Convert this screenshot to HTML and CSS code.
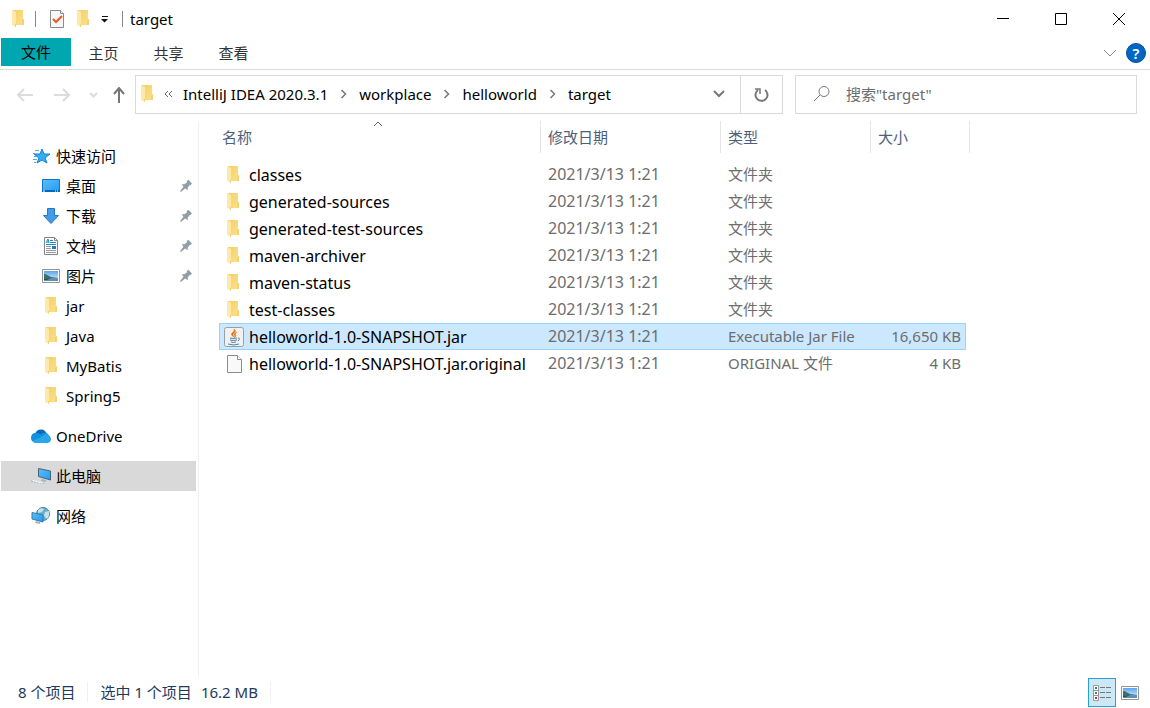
FILE: index.html
```html
<!DOCTYPE html>
<html lang="zh-CN">

<head>
    <meta charset="UTF-8">
    <meta name="viewport" content="width=device-width, initial-scale=1.0">
    <title>target</title>
    <link rel="stylesheet" href="styles.css">
</head>

<body>

    <!-- Icons used more than once -->
    <svg class="icon-defs" aria-hidden="true">
        <defs>
            <linearGradient id="fold" x1="0" y1="0" x2="1" y2="1">
                <stop offset="0" stop-color="#f1cf6b" />
                <stop offset="1" stop-color="#fde08a" />
            </linearGradient>
            <linearGradient id="sky" x1="0" y1="0" x2="0" y2="1">
                <stop offset="0" stop-color="#5aa5ef" />
                <stop offset="1" stop-color="#e6f4fb" />
            </linearGradient>
            <linearGradient id="screen" x1="0" y1="0" x2="1" y2="1">
                <stop offset="0" stop-color="#63bdf7" />
                <stop offset="1" stop-color="#1e9bf5" />
            </linearGradient>
        </defs>
        <symbol id="folder" viewBox="0 0 14 18">
            <path d="M2 0H12V9L13 9V15H2Z" fill="url(#fold)" />
            <path d="M11 10L13 9V15H11Z" fill="#f5d271" />
            <path d="M1 0L5 2V17L1 15Z" fill="#ffe9a9" />
            <path d="M4 14L5 14V17L4 16.500Z" fill="#f3cf70" />
        </symbol>
        <symbol id="pin" viewBox="0 0 14 14">
            <path d="M8 1L10 0L14 4L12 6L11 6L9 9L9 12L6 10L1 14L0 13L4 8L2 5L5 5L8 3Z" fill="#939da6" />
        </symbol>
        <symbol id="chevron-down" viewBox="0 0 14 9">
            <path d="M1 1L7 7L13 1" fill="none" stroke="currentColor" />
        </symbol>
        <symbol id="chevron-right" viewBox="0 0 6 10">
            <path d="M1 1L5 5L1 9" fill="none" stroke="#777" stroke-width="1.500" />
        </symbol>
        <symbol id="picture" viewBox="0 0 18 14">
            <path d="M.5 .5H17.500V13.500H.5Z" fill="#fff" stroke="#949494" />
            <path d="M2 2H16V12H2Z" fill="url(#sky)" />
            <path d="M2 5C5 5 6 7 9 8L16 9V10H2Z" fill="#3d7060" />
            <path d="M2 10L9 9L16 9V12H2Z" fill="#5f8fb8" />
            <path d="M2 10L9 9L5 11H2Z" fill="#254f59" />
        </symbol>
    </svg>

    <header class="titlebar">
        <svg class="folder"><use href="#folder" /></svg>
        <span class="divider"></span>
        <button class="quick" aria-label="属性">
            <svg width="14" height="18" viewBox="0 0 14 18">
                <path d="M.5 .5H10.500L13.500 3.500V17.500H.5Z" fill="#f6f6f6" stroke="#8b8b8b" />
                <path d="M10.500 .5V3.500H13.500" fill="#fff" stroke="#8b8b8b" />
                <path d="M3 9L6 12L12 6" fill="none" stroke="#f0591a" stroke-width="2" />
            </svg>
        </button>
        <button class="quick" aria-label="新建文件夹"><svg class="folder"><use href="#folder" /></svg></button>
        <button class="quick customize" aria-label="自定义快速访问工具栏">
            <svg width="8" height="7" viewBox="0 0 8 7">
                <path d="M1 0H7V1H1ZM0 3H7L3.500 6.500Z" fill="#111" />
            </svg>
        </button>
        <span class="divider"></span>
        <h1>target</h1>
        <div class="window-controls">
            <button aria-label="最小化"><svg width="12" height="12"><path d="M0 5.500H12" /></svg></button>
            <button aria-label="最大化"><svg width="12" height="12"><path d="M.5 .5H11.500V11.500H.5Z" /></svg></button>
            <button aria-label="关闭"><svg width="12" height="12"><path d="M0 0L12 12M12 0L0 12" /></svg></button>
        </div>
    </header>

    <nav class="ribbon">
        <button class="tab file">文件</button>
        <button class="tab">主页</button>
        <button class="tab">共享</button>
        <button class="tab">查看</button>
        <button class="expand" aria-label="展开功能区"><svg width="14" height="9"><use href="#chevron-down" /></svg></button>
        <button class="help" aria-label="帮助">?</button>
    </nav>

    <div class="toolbar">
        <div class="history">
            <button aria-label="后退">
                <svg width="16" height="14"><path d="M16 7H1M7 1L1 7L7 13" /></svg>
            </button>
            <button aria-label="前进">
                <svg width="16" height="14"><path d="M0 7H15M9 1L15 7L9 13" /></svg>
            </button>
            <button class="recent" aria-label="最近浏览的位置">
                <svg width="9" height="6"><path d="M1 1L4.500 4.500L8 1" /></svg>
            </button>
            <button class="up" aria-label="向上">
                <svg width="12" height="16"><path d="M6 16V1M1 7L6 1L11 7" /></svg>
            </button>
        </div>
        <div class="address">
            <svg class="folder"><use href="#folder" /></svg>
            <button class="more" aria-label="上级">
                <svg width="9" height="8"><path d="M4 1L1 4L4 7M8 1L5 4L8 7" fill="none" stroke="#666" /></svg>
            </button>
            <a href="#">IntelliJ IDEA 2020.3.1</a>
            <svg class="sep"><use href="#chevron-right" /></svg>
            <a href="#">workplace</a>
            <svg class="sep"><use href="#chevron-right" /></svg>
            <a href="#">helloworld</a>
            <svg class="sep"><use href="#chevron-right" /></svg>
            <a href="#">target</a>
            <button class="drop" aria-label="以前的位置">
                <svg width="12" height="8"><path d="M1 1L6 6L11 1" fill="none" stroke="#777" stroke-width="2" /></svg>
            </button>
            <button class="refresh" aria-label="刷新">
                <svg width="16" height="16" viewBox="0 0 16 16">
                    <path d="M11 3A6 6 0 1 1 4 3" fill="none" stroke="#777" stroke-width="2" />
                    <path d="M1 2H6V7" fill="none" stroke="#777" stroke-width="1.500" />
                </svg>
            </button>
        </div>
        <label class="search">
            <svg width="16" height="16" viewBox="0 0 16 16">
                <path d="M0 15L6 9" stroke="#777" />
                <circle cx="10" cy="5.500" r="5" fill="none" stroke="#777" />
            </svg>
            <input type="text" placeholder='搜索"target"' aria-label="搜索">
        </label>
    </div>

    <main>
        <nav class="sidebar">
            <div class="group">
                <a href="#" class="root">
                    <svg width="20" height="18" viewBox="0 0 20 18">
                        <path d="M11 2L13 7L19 7L14 11L16 16L11 13L6 16L8 11L3 7L9 7Z" fill="#33adf3" stroke="#1483d2" />
                        <path d="M4 3.500H8M2 6.500H4M3 9.500H6M2 12.500H6M3 15.500H5" stroke="#5aa8df" />
                    </svg>
                    快速访问
                </a>
                <a href="#">
                    <svg width="18" height="14" viewBox="0 0 18 14">
                        <path d="M.5 .5H17.500V12.500H.5Z" fill="url(#screen)" stroke="#0b78cb" />
                        <path d="M0 11H18V13H0Z" fill="#0968b5" />
                        <path d="M1 12H3M13 12H14M15 12H16" stroke="#fff" />
                    </svg>
                    桌面
                    <svg class="pin"><use href="#pin" /></svg>
                </a>
                <a href="#">
                    <svg width="18" height="16" viewBox="0 0 18 16">
                        <path d="M5.500 .5H12.500V7.500H16.500L9 15.500L1.500 7.500H5.500Z" fill="#4499e8" stroke="#2479c5" />
                    </svg>
                    下载
                    <svg class="pin"><use href="#pin" /></svg>
                </a>
                <a href="#">
                    <svg width="18" height="18" viewBox="0 0 18 18">
                        <path d="M2.500 .5H12.500L15.500 3.500V17.500H2.500Z" fill="#fff" stroke="#858585" />
                        <path d="M12.500 .5V3.500H15.500" fill="none" stroke="#858585" />
                        <path d="M4 6L6 2L7 6M5 5H7M8 3.500H11M8 5.500H14M4 7.500H14" fill="none" stroke="#178fd0" />
                        <path d="M4 9.500H9M4 11.500H9M4 13.500H14M4 15.500H14" stroke="#999" />
                        <path d="M10 9H14V12H10Z" fill="#2677bc" />
                    </svg>
                    文档
                    <svg class="pin"><use href="#pin" /></svg>
                </a>
                <a href="#">
                    <svg width="18" height="14"><use href="#picture" /></svg>
                    图片
                    <svg class="pin"><use href="#pin" /></svg>
                </a>
                <a href="#"><svg class="folder"><use href="#folder" /></svg>jar</a>
                <a href="#"><svg class="folder"><use href="#folder" /></svg>Java</a>
                <a href="#"><svg class="folder"><use href="#folder" /></svg>MyBatis</a>
                <a href="#"><svg class="folder"><use href="#folder" /></svg>Spring5</a>
            </div>
            <a href="#" class="root">
                <svg width="20" height="14" viewBox="0 0 20 14">
                    <path d="M4 5C5 1 10-1 14 2L16 5L14 9L4 10Z" fill="#0869bd" />
                    <path d="M4 4C1 4 0 7 0 9C0 12 2 13 4 13L13 8L7 4Z" fill="#1490df" />
                    <path d="M8 5L14 8L3 13Q2 13 2 13L16 14L20 10Q18 5 15 4Q12 3 10 5Z" fill="#1590dc" />
                    <path d="M2 12L12 7Q14 4 17 6Q20 8 20 11Q19 14 16 14H4Q2 14 2 12Z" fill="#28a8ea" />
                </svg>
                OneDrive
            </a>
            <a href="#" class="root selected">
                <svg width="20" height="18" viewBox="0 0 20 18">
                    <path d="M7.500 1.500L19.500 4V13L7.500 9.500Z" fill="url(#screen)" stroke="#46637d" />
                    <path d="M11 12L15 13V15L10 14Z" fill="#a8b4bd" />
                    <path d="M0 14L3 13L13 16L10 18Z" fill="#f1f3f5" />
                    <path d="M0 14L10 17L13 16" fill="none" stroke="#9ca6ad" stroke-dasharray="2 1" />
                </svg>
                此电脑
            </a>
            <a href="#" class="root">
                <svg width="20" height="18" viewBox="0 0 20 18">
                    <circle cx="12" cy="7" r="6.500" fill="#6caec9" stroke="#487d9d" />
                    <path d="M7 3Q10 0 13 2L11 5L7 6ZM14 5L18 4Q19 9 16 12L13 9Z" fill="#c4e3e8" />
                    <path d="M1 5.500L12 8V15L1 12Z" fill="url(#screen)" stroke="#327eac" />
                    <path d="M5 14L9 15V17L4 16Z" fill="#a9b4bb" />
                </svg>
                网络
            </a>
        </nav>

        <section class="files">
            <table>
                <colgroup>
                    <col class="col-name">
                    <col class="col-date">
                    <col class="col-type">
                    <col class="col-size">
                    <col class="col-end">
                </colgroup>
                <thead>
                    <tr>
                        <th class="sorted">
                            <svg class="sort" width="10" height="6"><path d="M1 5L5 1L9 5" fill="none" stroke="#666" /></svg>
                            <span>名称</span>
                        </th>
                        <th><span>修改日期</span></th>
                        <th><span>类型</span></th>
                        <th class="last" colspan="2"><span>大小</span></th>
                    </tr>
                </thead>
                <tbody>
                    <tr>
                        <td><svg class="folder"><use href="#folder" /></svg>classes</td>
                        <td>2021/3/13 1:21</td>
                        <td>文件夹</td>
                        <td></td>
                    </tr>
                    <tr>
                        <td><svg class="folder"><use href="#folder" /></svg>generated-sources</td>
                        <td>2021/3/13 1:21</td>
                        <td>文件夹</td>
                        <td></td>
                    </tr>
                    <tr>
                        <td><svg class="folder"><use href="#folder" /></svg>generated-test-sources</td>
                        <td>2021/3/13 1:21</td>
                        <td>文件夹</td>
                        <td></td>
                    </tr>
                    <tr>
                        <td><svg class="folder"><use href="#folder" /></svg>maven-archiver</td>
                        <td>2021/3/13 1:21</td>
                        <td>文件夹</td>
                        <td></td>
                    </tr>
                    <tr>
                        <td><svg class="folder"><use href="#folder" /></svg>maven-status</td>
                        <td>2021/3/13 1:21</td>
                        <td>文件夹</td>
                        <td></td>
                    </tr>
                    <tr>
                        <td><svg class="folder"><use href="#folder" /></svg>test-classes</td>
                        <td>2021/3/13 1:21</td>
                        <td>文件夹</td>
                        <td></td>
                    </tr>
                    <tr class="selected">
                        <td>
                            <svg width="20" height="20" viewBox="0 0 20 20">
                                <rect x=".5" y=".5" width="19" height="19" rx="2" fill="#f1f1f1" stroke="#96a0a8" />
                                <path d="M10 2Q13 4 10 6Q8 8 10 10Q6 8 8 6Q11 4 10 2ZM13 5Q10 7 12 9L10 11Q12 8 10 8Q10 6 13 5Z" fill="#e8701a" stroke="#e8701a" stroke-width=".5" />
                                <path d="M6 11Q9 12 13 11M6 13Q9 14 13 13M7 15Q9 16 12 15M4 17Q10 19 15 17M14 11Q17 11 14 14" fill="none" stroke="#55809f" />
                            </svg>helloworld-1.0-SNAPSHOT.jar
                        </td>
                        <td>2021/3/13 1:21</td>
                        <td>Executable Jar File</td>
                        <td>16,650 KB</td>
                    </tr>
                    <tr>
                        <td>
                            <svg width="20" height="18" viewBox="0 0 20 18">
                                <path d="M3.500 .5H13.500L17.500 4.500V17.500H3.500Z" fill="#f9f9f9" stroke="#8c8c8c" />
                                <path d="M13.500 .5V4.500H17.500" fill="#fff" stroke="#8c8c8c" />
                            </svg>helloworld-1.0-SNAPSHOT.jar.original
                        </td>
                        <td>2021/3/13 1:21</td>
                        <td>ORIGINAL 文件</td>
                        <td>4 KB</td>
                    </tr>
                </tbody>
            </table>
        </section>
    </main>

    <footer class="statusbar">
        <span class="count">8 个项目</span>
        <span class="selection"><span>选中 1 个项目</span><span>16.2 MB</span></span>
        <div class="views">
            <button class="active" aria-label="详细信息">
                <svg width="20" height="18" viewBox="0 0 20 18">
                    <path d="M1.500 1.500H6.500V16.500H1.500ZM1.500 6.500H6.500M1.500 11.500H6.500" fill="#fff" stroke="#999" />
                    <path d="M3 4H5" stroke="#2d7d9a" stroke-width="2" />
                    <path d="M3 9H5" stroke="#4c8060" stroke-width="2" />
                    <path d="M3 14H5" stroke="#c3371c" stroke-width="2" />
                    <path d="M8 3.500H13M14 3.500H19M8 8.500H13M14 8.500H19M8 13.500H13M14 13.500H19" stroke="#777" />
                </svg>
            </button>
            <button aria-label="大图标"><svg width="18" height="14"><use href="#picture" /></svg></button>
        </div>
    </footer>

</body>

</html>
```
FILE: styles.css
```css
* {
    box-sizing: border-box;
}

body {
    font-family: "Noto Sans", "Noto Sans CJK SC", sans-serif;
    font-size: 15px;
    line-height: 20px;
    color: #000;
    background-color: #fff;
    margin: 0;
    display: flex;
    flex-direction: column;
    height: 100vh;
}

button {
    font: inherit;
    color: inherit;
    background: none;
    border: none;
    padding: 0;
    display: flex;
    align-items: center;
    justify-content: center;
}

a {
    color: inherit;
    text-decoration: none;
    white-space: nowrap;
}

svg {
    flex-shrink: 0;
}

.icon-defs {
    position: absolute;
    width: 0;
    height: 0;
}

.folder {
    width: 14px;
    height: 18px;
}

/* Title bar */
.titlebar {
    display: flex;
    align-items: center;
    height: 38px;
    padding: 0 2px 0 11px;
}

.divider {
    width: 1px;
    height: 16px;
    margin: 0 8px 0 10px;
    background-color: #8a8a8a;
}

.quick {
    width: 26px;
    height: 24px;
}

.titlebar .customize {
    width: 18px;
}

.customize + .divider {
    margin: 0 7px 0 8px;
}

.titlebar h1 {
    font-size: 15px;
    font-weight: 400;
    margin: 0;
}

.window-controls {
    display: flex;
    margin-left: auto;
}

.window-controls button {
    width: 58px;
    height: 38px;
}

.window-controls path {
    fill: none;
    stroke: #000;
}

/* Ribbon */
.ribbon {
    display: flex;
    height: 32px;
    padding: 0 4px 0 1px;
    border-bottom: 1px solid #dadbdc;
}

.tab {
    width: 65px;
    height: 30px;
    color: #333;
}

.tab.file {
    width: 70px;
    height: 28px;
    color: #000;
    background-color: #00a6b0;
}

.expand {
    width: 32px;
    height: 30px;
    margin-left: auto;
    color: #8a8a8a;
}

.help {
    width: 20px;
    height: 20px;
    margin-top: 5px;
    font-weight: 600;
    color: #fff;
    background-color: #0066c5;
    border: 1px solid #004f9b;
    border-radius: 50%;
}

/* Address bar */
.toolbar {
    display: flex;
    padding: 5px 13px 0 14px;
}

.history {
    display: flex;
    align-items: center;
    width: 121px;
    gap: 15px;
}

.history button {
    width: 22px;
    height: 24px;
}

.history path {
    fill: none;
    stroke: #dcdcdc;
    stroke-width: 2;
}

.history .recent {
    width: 10px;
}

.history .up {
    width: 12px;
}

.history .up path {
    stroke: #777;
}

.address {
    display: flex;
    align-items: center;
    flex: 1;
    height: 39px;
    padding: 0 0 2px 4px;
    border: 1px solid #d9d9d9;
}

.more {
    width: 29px;
    height: 24px;
}

.sep {
    width: 31px;
    height: 10px;
}

.drop {
    width: 42px;
    height: 37px;
    margin-left: auto;
}

.refresh {
    align-self: flex-start;
    width: 42px;
    height: 37px;
    border-left: 1px solid #d9d9d9;
}

.search {
    display: flex;
    align-items: center;
    gap: 16px;
    width: 342px;
    height: 39px;
    margin-left: 12px;
    padding: 0 0 2px 18px;
    border: 1px solid #d9d9d9;
}

.search input {
    flex: 1;
    min-width: 0;
    font: inherit;
    padding: 0;
    border: none;
    outline: none;
}

.search input::placeholder {
    color: #6d6d6d;
    opacity: 1;
}

/* Main area */
main {
    display: flex;
    flex: 1;
    min-height: 0;
    padding-top: 7px;
}

.sidebar {
    display: flex;
    flex-direction: column;
    gap: 10px;
    width: 199px;
    padding: 20px 2px 0 1px;
    border-right: 1px solid #f0f0f0;
}

.sidebar a {
    display: flex;
    align-items: center;
    gap: 6px;
    height: 30px;
    padding: 0 4px 0 41px;
}

.sidebar a.root {
    gap: 5px;
    padding-left: 30px;
}

.sidebar a.selected {
    background-color: #d9d9d9;
}

.sidebar .folder {
    width: 18px;
}

.sidebar .pin {
    width: 12px;
    height: 12px;
    margin-left: auto;
}

/* File list */
.files {
    flex: 1;
    padding-left: 20px;
}

table {
    width: 751px;
    table-layout: fixed;
    border-collapse: collapse;
}

.col-name {
    width: 321px;
}

.col-date {
    width: 180px;
}

.col-type {
    width: 150px;
}

.col-size {
    width: 96px;
}

.col-end {
    width: 4px;
}

th {
    height: 40px;
    padding: 0 0 8px;
    font-weight: 400;
    text-align: left;
    color: #4c607a;
}

th span {
    display: block;
    padding: 6px 7px;
    border-left: 1px solid #e5e5e5;
}

.sorted {
    position: relative;
}

.sorted span {
    padding-left: 3px;
    border-left: none;
}

.sort {
    position: absolute;
    top: 0;
    left: calc(50% - 7px);
}

.last span {
    border-right: 1px solid #e5e5e5;
}

td {
    height: 27px;
    padding: 0 8px 1px;
    color: #6d6d6d;
    white-space: nowrap;
}

td:first-child {
    display: flex;
    align-items: center;
    gap: 5px;
    padding: 0 0 0 5px;
    color: #000;
}

td:nth-child(-n+2) {
    font-size: 16px;
}

td .folder {
    width: 18px;
    margin-right: 2px;
}

td:nth-child(4) {
    padding: 0 5px 1px;
    text-align: right;
}

.selected td {
    background-color: #cce8ff;
    box-shadow: inset 0 1px #99d1ff, inset 0 -1px #99d1ff;
}

.selected td:first-child {
    box-shadow: inset 0 1px #99d1ff, inset 0 -1px #99d1ff, inset 1px 0 #99d1ff;
}

.selected td:last-child {
    box-shadow: inset 0 1px #99d1ff, inset 0 -1px #99d1ff, inset -1px 0 #99d1ff;
}

/* Status bar */
.statusbar {
    display: flex;
    align-items: center;
    height: 31px;
    padding: 0 6px 0 18px;
    color: #1e395b;
}

.count,
.selection {
    padding-right: 12px;
    margin-bottom: 2px;
    border-right: 1px solid #f0f0f0;
}

.selection {
    display: flex;
    gap: 9px;
    padding-left: 12px;
}

.views {
    display: flex;
    margin-left: auto;
}

.views button {
    width: 28px;
    height: 29px;
}

.views .active {
    background-color: #cce8f6;
    border: 1px solid #26a0da;
}
```
